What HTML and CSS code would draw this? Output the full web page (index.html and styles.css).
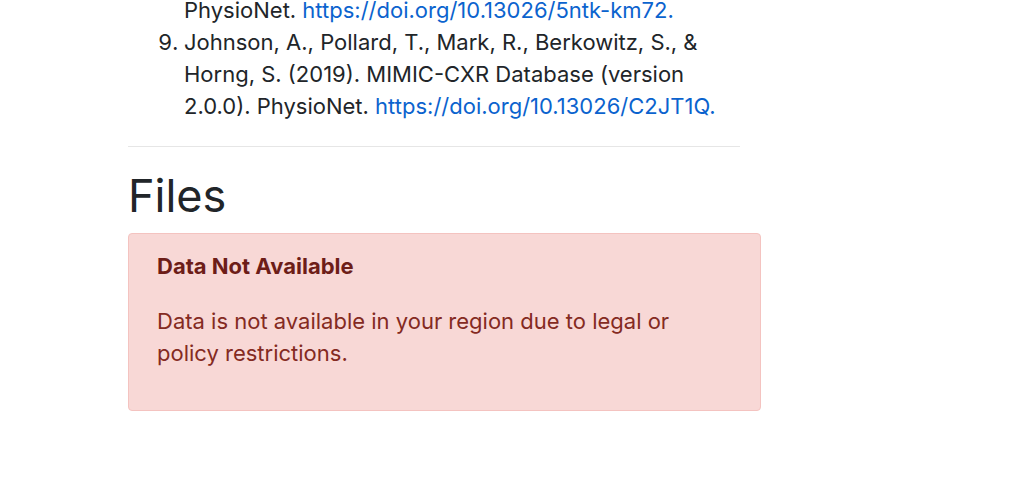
FILE: index.html
```html
<!DOCTYPE html>
<html lang="en">
<head>
<meta charset="utf-8">
<title>Files</title>
<link rel="stylesheet" href="styles.css">
</head>
<body>
<main class="content">
  <ol class="refs" start="8">
    <li class="cont">PhysioNet. <a href="#">https://doi.org/10.13026/5ntk-km72.</a></li>
    <li>Johnson, A., Pollard, T., Mark, R., Berkowitz, S., &amp; Horng, S. (2019). MIMIC-CXR Database (version 2.0.0). PhysioNet. <a href="#">https://doi.org/10.13026/C2JT1Q.</a></li>
  </ol>
  <hr class="rule">
  <h2 class="title">Files</h2>
  <div class="alert">
    <h5 class="alert-heading">Data Not Available</h5>
    <p class="alert-text">Data is not available in your region due to legal or policy restrictions.</p>
  </div>
</main>
</body>
</html>
```

FILE: styles.css
```css
html, body {
  margin: 0;
  padding: 0;
  background: #ffffff;
}
body {
  font-family: Inter, "Noto Sans", sans-serif;
  font-size: 22px;
  line-height: 32px;
  color: #212529;
}
.content {
  width: 633px;
  margin-left: 128px;
}
.refs {
  margin: -6px 0 0 0;
  padding-left: 56px;
  width: 556px;
}
.refs li.cont {
  list-style-type: none;
}
.refs a {
  color: #0b63ce;
  text-decoration: none;
}
.rule {
  width: 612px;
  margin: 24px 0 0 0;
  border: 0;
  border-top: 1px solid #e6e6e6;
}
.title {
  font-size: 45px;
  font-weight: 400;
  line-height: 54px;
  margin: 22px 0 0 0;
}
.alert {
  margin-top: 10px;
  background: #f8d8d6;
  border: 1px solid #f4c3c0;
  border-radius: 4px;
  color: #842a22;
  padding: 16px 28px 17px 28px;
}
.alert-heading {
  margin: 0 0 23px 0;
  font-size: 22px;
  line-height: 32px;
  font-weight: 700;
  color: #6d1d18;
}
.alert-text {
  margin: 0 0 24px 0;
}
```
